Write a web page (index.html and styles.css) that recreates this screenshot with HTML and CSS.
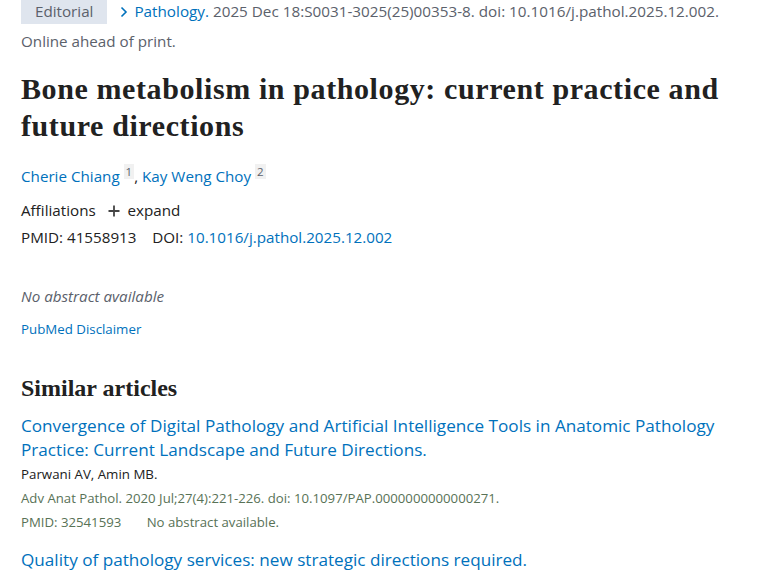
FILE: index.html
```html
<!DOCTYPE html>
<html>
<head>
<meta charset="utf-8">
<link rel="stylesheet" href="styles.css">
</head>
<body>
<main class="page">
  <div class="cite-row">
    <span class="badge">Editorial</span>
    <span class="cite"><svg class="chev" width="8" height="12" viewBox="0 0 8 12"><path d="M1.5 1.5 L6 6 L1.5 10.5" fill="none" stroke="#0071bc" stroke-width="1.6"/></svg><a class="link">Pathology.</a> 2025 Dec 18:S0031-3025(25)00353-8. doi: 10.1016/j.pathol.2025.12.002.</span>
  </div>
  <div class="ahead">Online ahead of print.</div>
  <h1 class="title">Bone metabolism in pathology: current practice and future directions</h1>
  <div class="authors"><a class="link">Cherie Chiang</a> <sup class="sup">1</sup>, <a class="link">Kay Weng Choy</a> <sup class="sup">2</sup></div>
  <div class="affil">Affiliations <svg class="plus" width="12" height="12" viewBox="0 0 12 12"><path d="M6 0.5 V11.5 M0.5 6 H11.5" stroke="#444" stroke-width="1.8"/></svg> expand</div>
  <div class="ids">PMID: 41558913 &nbsp;&nbsp; DOI: <a class="link">10.1016/j.pathol.2025.12.002</a></div>
  <div class="noabs">No abstract available</div>
  <a class="link disclaimer">PubMed Disclaimer</a>
  <h2 class="similar">Similar articles</h2>
  <div class="doc">
    <a class="link doc-title">Convergence of Digital Pathology and Artificial Intelligence Tools in Anatomic Pathology Practice: Current Landscape and Future Directions.</a>
    <div class="doc-authors">Parwani AV, Amin MB.</div>
    <div class="doc-cite">Adv Anat Pathol. 2020 Jul;27(4):221-226. doi: 10.1097/PAP.0000000000000271.</div>
    <div class="doc-cite">PMID: 32541593 <span class="gap">No abstract available.</span></div>
  </div>
  <div class="doc">
    <a class="link doc-title">Quality of pathology services: new strategic directions required.</a>
  </div>
</main>
</body>
</html>
```
FILE: styles.css
```css
html, body { margin: 0; padding: 0; background: #fff; }
body { font-family: "Open Sans", "Noto Sans", sans-serif; color: #212121; overflow: hidden; }
.page { padding: 0 21px; display: flex; flex-direction: column; align-items: flex-start; }
.link { color: #0071bc; text-decoration: none; }
.cite-row { display: flex; align-items: baseline; margin-top: -8px; white-space: nowrap; }
.badge { background: #dfe5ee; color: #5b616b; font-size: 15.2px; padding: 10px 14px 3px 14px; line-height: 19px; }
.cite { color: #5b616b; font-size: 15.25px; margin-left: 13px; line-height: 19px; }
.chev { margin-right: 6px; vertical-align: -1px; }
.ahead { color: #5b616b; font-size: 15.2px; line-height: 22px; margin-top: 6px; }
.title { font-family: "Liberation Serif", serif; font-weight: bold; font-size: 30px; letter-spacing: 0.6px; line-height: 37px; margin: 18px 0 0; color: #212121; }
.authors { font-size: 15.2px; margin-top: 17px; line-height: 22px; }
.sup { font-size: 11.5px; background: #f1f1f1; color: #5b616b; padding: 0 2px; }
.affil { font-size: 15.2px; margin-top: 12px; line-height: 22px; }
.plus { margin: 0 4px 0 8px; vertical-align: -1px; }
.ids { font-size: 15.2px; line-height: 22px; margin-top: 5px; }
.noabs { font-style: italic; color: #5b616b; font-size: 15.2px; margin-top: 37px; line-height: 22px; }
.disclaimer { font-size: 13.3px; margin-top: 12px; line-height: 20px; }
.similar { font-family: "Liberation Serif", serif; font-weight: bold; font-size: 24px; line-height: 30px; margin: 34px 0 0; }
.doc { margin-top: 11px; display: flex; flex-direction: column; }
.doc + .doc { margin-top: 14px; }
.doc-title { font-size: 17.15px; line-height: 24px; }
.doc-authors { font-size: 13.3px; line-height: 24px; color: #212121; }
.doc-cite { font-size: 13.2px; line-height: 24px; color: #587256; }
.gap { margin-left: 22px; }
```
